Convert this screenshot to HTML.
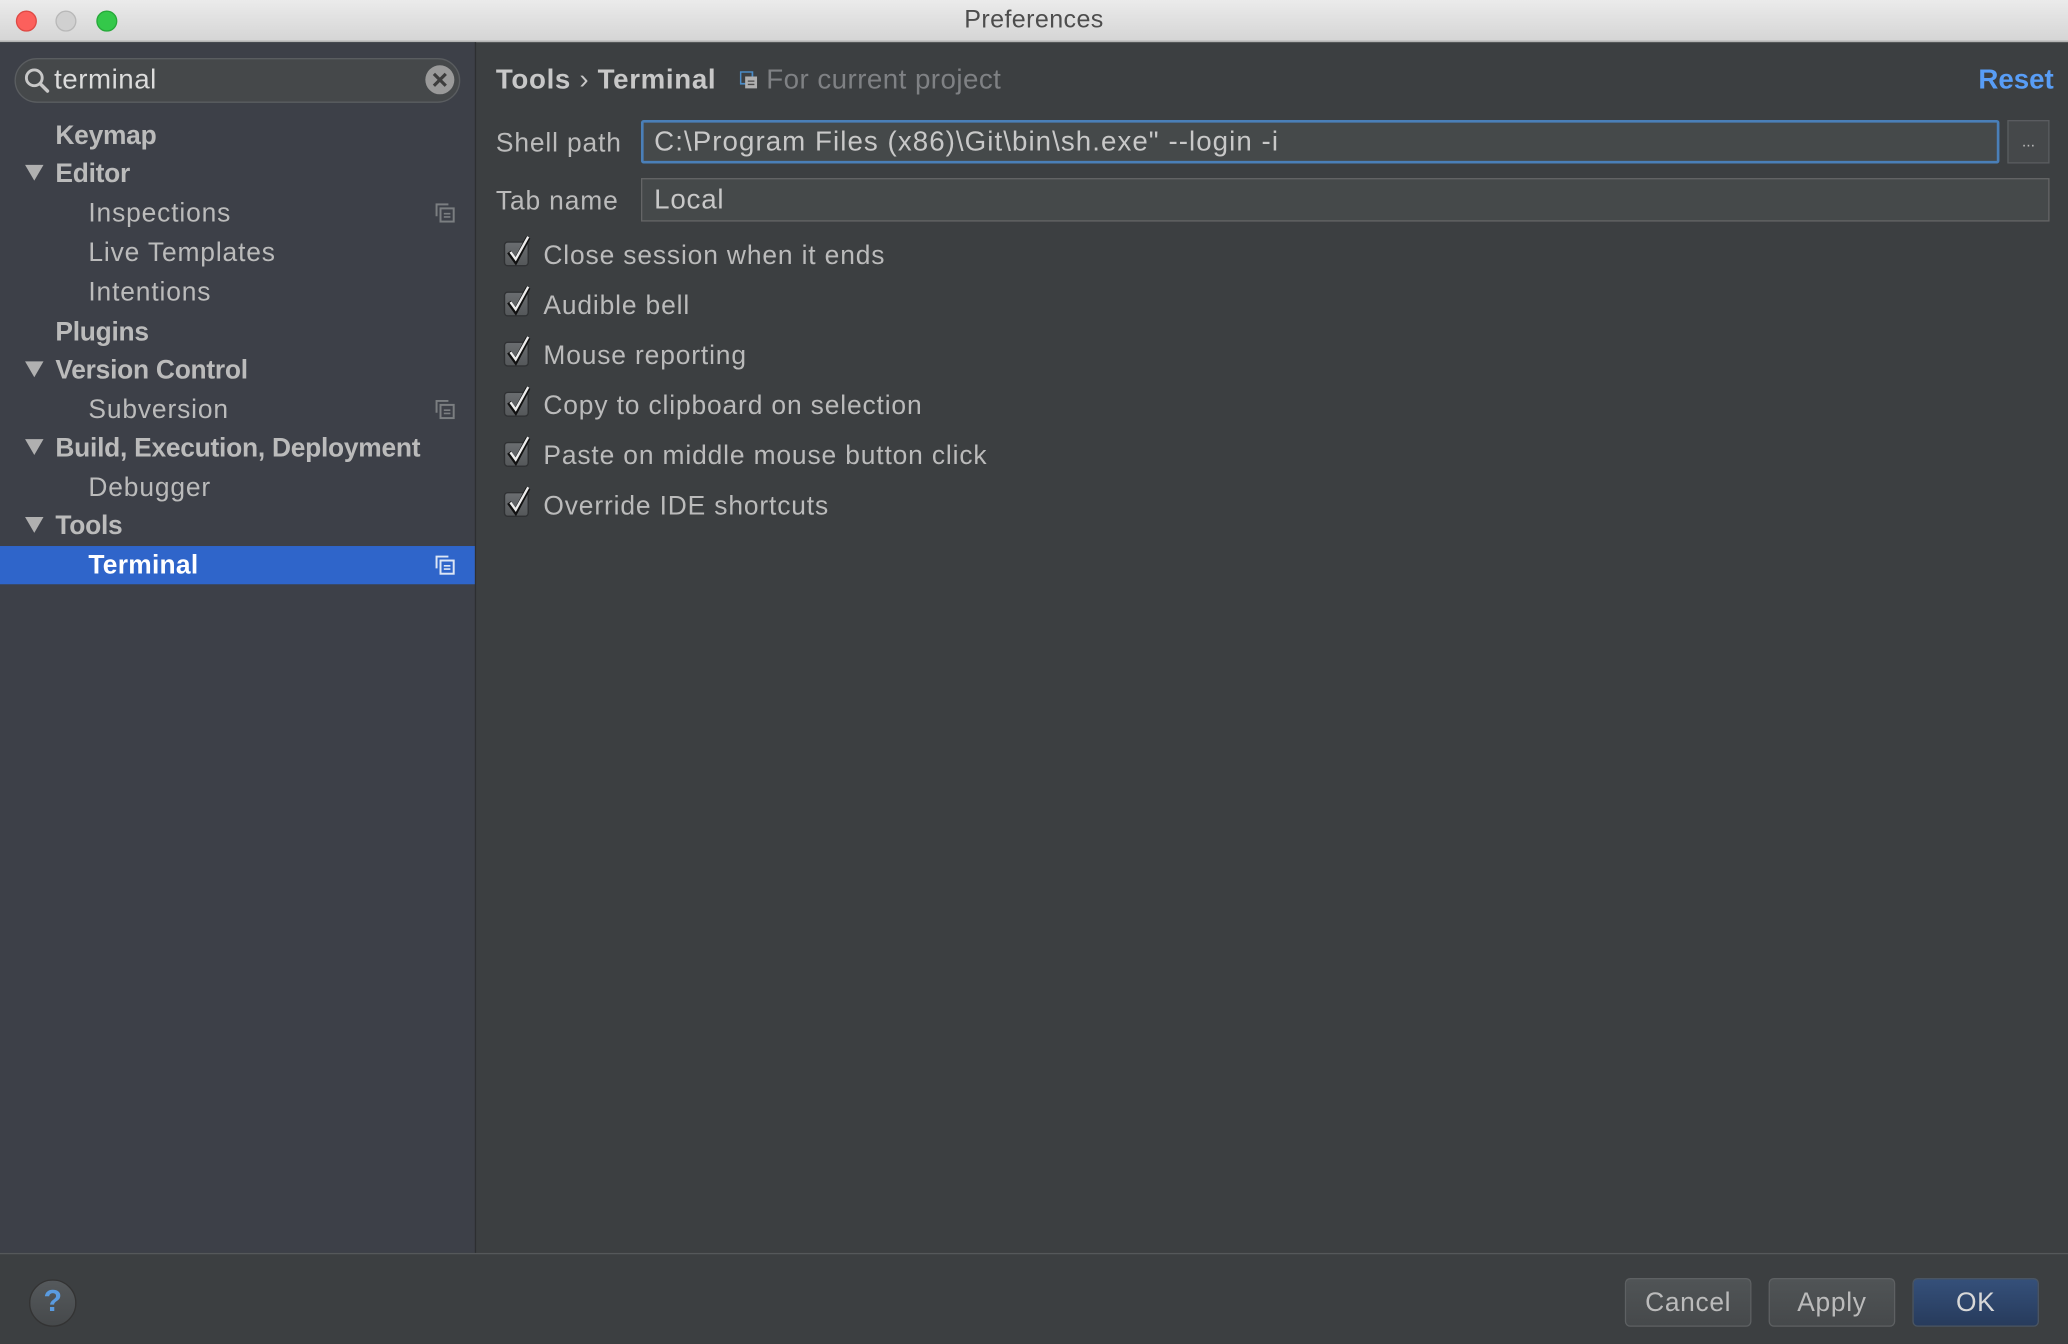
<!DOCTYPE html>
<html><head><meta charset="utf-8"><style>
html,body{margin:0;padding:0;width:2068px;height:1344px;overflow:hidden;background:#3c3f41}
#w{position:absolute;left:0;top:0;width:1568px;height:1019px;transform:scale(1.31888);transform-origin:0 0;font-family:"Liberation Sans",sans-serif;background:#3c3f41}
.a{position:absolute;white-space:nowrap}
.t{color:#bbbbbb;font-size:20px;line-height:24px;letter-spacing:0.65px}
.b{font-weight:bold;letter-spacing:-0.2px}
.tri{position:absolute;width:0;height:0;border-left:7px solid transparent;border-right:7px solid transparent;border-top:12px solid #b0b0b0}
.cb{position:absolute;left:382px;width:19px;height:19px;background:linear-gradient(#6a6d70,#55585a);border:1px solid #2f3133;border-radius:3px;box-sizing:border-box}
.cb svg{position:absolute;left:0;top:-6px}
.btn{position:absolute;top:969px;height:37px;width:96px;border:1px solid #5e6163;border-radius:4px;box-sizing:border-box;background:linear-gradient(#505456,#46494b);color:#bbbbbb;font-size:20px;text-align:center;line-height:37px;letter-spacing:0.5px}
</style></head><body><div id="w">
<div class="a" style="left:0;top:0;width:1568px;height:31px;background:linear-gradient(#ebebeb,#d5d5d5);border-bottom:1px solid #b4b4b4"></div>
<div class="a" style="left:12px;top:8px;width:14px;height:14px;border-radius:50%;background:#fc605c;border:0.5px solid #de4a45"></div>
<div class="a" style="left:42px;top:8px;width:14px;height:14px;border-radius:50%;background:#d0d0d0;border:0.5px solid #b8b8b8"></div>
<div class="a" style="left:73px;top:8px;width:14px;height:14px;border-radius:50%;background:#34c84a;border:0.5px solid #27a93a"></div>
<div class="a" style="left:0;top:5px;width:1568px;text-align:center;font-size:19px;color:#4d4d4d;letter-spacing:0.3px">Preferences</div>
<div class="a" style="left:0;top:32px;width:360px;height:918px;background:#3d4048;border-right:1px solid #2d2f31"></div>
<div class="a" style="left:11px;top:44px;width:336px;height:32px;border-radius:17px;background:#45484a;border:1px solid #5a5d60"></div>
<svg class="a" style="left:17px;top:50px" width="22" height="22" viewBox="0 0 22 22"><circle cx="9" cy="9" r="6" fill="none" stroke="#c8c8c8" stroke-width="2.2"/><line x1="13.5" y1="13.5" x2="19" y2="19" stroke="#c8c8c8" stroke-width="2.6" stroke-linecap="round"/></svg>
<div class="a" style="left:41px;top:49px;font-size:21px;color:#dcdcdc;letter-spacing:0.4px">terminal</div>
<svg class="a" style="left:322px;top:49px" width="23" height="23" viewBox="0 0 23 23"><circle cx="11.5" cy="11.5" r="11" fill="#9a9a9a"/><path d="M7 7L16 16M16 7L7 16" stroke="#3d3d3d" stroke-width="2.4"/></svg>

<div class="a t b" style="left:42px;top:91px">Keymap</div>
<div class="tri" style="left:19px;top:125px"></div><div class="a t b" style="left:42px;top:120px">Editor</div>
<div class="a t" style="left:67px;top:150px">Inspections</div>
<div class="a t" style="left:67px;top:180px">Live Templates</div>
<div class="a t" style="left:67px;top:210px">Intentions</div>
<div class="a t b" style="left:42px;top:240px">Plugins</div>
<div class="tri" style="left:19px;top:274px"></div><div class="a t b" style="left:42px;top:269px">Version Control</div>
<div class="a t" style="left:67px;top:299px">Subversion</div>
<div class="tri" style="left:19px;top:333px"></div><div class="a t b" style="left:42px;top:328px">Build, Execution, Deployment</div>
<div class="a t" style="left:67px;top:358px">Debugger</div>
<div class="tri" style="left:19px;top:392px"></div><div class="a t b" style="left:42px;top:387px">Tools</div>
<div class="a" style="left:0;top:414px;width:360px;height:29px;background:#2f65ca"></div>
<div class="a t" style="left:67px;top:417px;color:#fff;font-weight:bold;letter-spacing:0.2px">Terminal</div>
<svg class="a" style="left:330px;top:154px" width="15" height="15" viewBox="0 0 15 15"><path d="M1 10V1h9" fill="none" stroke="#7b7e81" stroke-width="1.5"/><rect x="4" y="4" width="10" height="10" fill="none" stroke="#7b7e81" stroke-width="1.5"/><path d="M6.5 8h5M6.5 10.5h5" stroke="#7b7e81" stroke-width="1.2"/></svg>
<svg class="a" style="left:330px;top:303px" width="15" height="15" viewBox="0 0 15 15"><path d="M1 10V1h9" fill="none" stroke="#7b7e81" stroke-width="1.5"/><rect x="4" y="4" width="10" height="10" fill="none" stroke="#7b7e81" stroke-width="1.5"/><path d="M6.5 8h5M6.5 10.5h5" stroke="#7b7e81" stroke-width="1.2"/></svg>
<svg class="a" style="left:330px;top:421px" width="15" height="15" viewBox="0 0 15 15"><path d="M1 10V1h9" fill="none" stroke="#dde6f5" stroke-width="1.5"/><rect x="4" y="4" width="10" height="10" fill="none" stroke="#dde6f5" stroke-width="1.5"/><path d="M6.5 8h5M6.5 10.5h5" stroke="#dde6f5" stroke-width="1.2"/></svg>

<div class="a b" style="left:376px;top:49px;font-size:21px;color:#c8c8c8;letter-spacing:0.5px">Tools <span style="font-weight:normal">›</span> Terminal</div>
<svg class="a" style="left:561px;top:54px" width="14" height="14" viewBox="0 0 14 14"><rect x="0.5" y="0.5" width="9" height="9" fill="none" stroke="#4b8cc8" stroke-width="1.3"/><rect x="4" y="4" width="9" height="9" fill="#b0b0b0"/><path d="M6 7.5h5M6 10h5" stroke="#4a4a4a" stroke-width="1"/></svg>
<div class="a" style="left:581px;top:49px;font-size:21px;color:#7f8184;letter-spacing:0.35px">For current project</div>
<div class="a b" style="left:1500px;top:49px;font-size:21px;color:#589df6;letter-spacing:0">Reset</div>

<div class="a t" style="left:376px;top:97px">Shell path</div>
<div class="a" style="left:486px;top:91px;width:1030px;height:33px;box-sizing:border-box;border:2px solid #4a7fb8;border-radius:2px;background:#45494a"></div>
<div class="a" style="left:496px;top:96px;font-size:21px;color:#c8c8c8;letter-spacing:0.8px">C:\Program Files (x86)\Git\bin\sh.exe" --login -i</div>
<div class="a" style="left:1522px;top:91px;width:32px;height:33px;box-sizing:border-box;border:1px solid #5a5d60;background:#45484a;color:#bbb;font-size:12px;text-align:center;line-height:30px">...</div>

<div class="a t" style="left:376px;top:141px">Tab name</div>
<div class="a" style="left:486px;top:135px;width:1068px;height:33px;box-sizing:border-box;border:1px solid #646566;background:#45494a"></div>
<div class="a" style="left:496px;top:140px;font-size:21px;color:#c8c8c8;letter-spacing:0.6px">Local</div>

<div class="cb" style="top:183px"><svg width="22" height="24" viewBox="0 0 22 24"><path d="M3 13l5 7L17.5 2" fill="none" stroke="#111" stroke-width="3.6"/><path d="M4 13l4 5.5L17.5 1.5" fill="none" stroke="#ececec" stroke-width="1.8"/></svg></div>
<div class="a t" style="left:412px;top:182px">Close session when it ends</div>
<div class="cb" style="top:221px"><svg width="22" height="24" viewBox="0 0 22 24"><path d="M3 13l5 7L17.5 2" fill="none" stroke="#111" stroke-width="3.6"/><path d="M4 13l4 5.5L17.5 1.5" fill="none" stroke="#ececec" stroke-width="1.8"/></svg></div>
<div class="a t" style="left:412px;top:220px">Audible bell</div>
<div class="cb" style="top:259px"><svg width="22" height="24" viewBox="0 0 22 24"><path d="M3 13l5 7L17.5 2" fill="none" stroke="#111" stroke-width="3.6"/><path d="M4 13l4 5.5L17.5 1.5" fill="none" stroke="#ececec" stroke-width="1.8"/></svg></div>
<div class="a t" style="left:412px;top:258px">Mouse reporting</div>
<div class="cb" style="top:297px"><svg width="22" height="24" viewBox="0 0 22 24"><path d="M3 13l5 7L17.5 2" fill="none" stroke="#111" stroke-width="3.6"/><path d="M4 13l4 5.5L17.5 1.5" fill="none" stroke="#ececec" stroke-width="1.8"/></svg></div>
<div class="a t" style="left:412px;top:296px">Copy to clipboard on selection</div>
<div class="cb" style="top:335px"><svg width="22" height="24" viewBox="0 0 22 24"><path d="M3 13l5 7L17.5 2" fill="none" stroke="#111" stroke-width="3.6"/><path d="M4 13l4 5.5L17.5 1.5" fill="none" stroke="#ececec" stroke-width="1.8"/></svg></div>
<div class="a t" style="left:412px;top:334px">Paste on middle mouse button click</div>
<div class="cb" style="top:373px"><svg width="22" height="24" viewBox="0 0 22 24"><path d="M3 13l5 7L17.5 2" fill="none" stroke="#111" stroke-width="3.6"/><path d="M4 13l4 5.5L17.5 1.5" fill="none" stroke="#ececec" stroke-width="1.8"/></svg></div>
<div class="a t" style="left:412px;top:372px">Override IDE shortcuts</div>

<div class="a" style="left:0;top:950px;width:1568px;height:1px;background:#55585a"></div>
<div class="a" style="left:22px;top:970px;width:34px;height:34px;border-radius:50%;background:linear-gradient(#55595c,#46494b);border:1px solid #333"></div>
<div class="a" style="left:22px;top:973px;width:36px;text-align:center;font-size:23px;font-weight:bold;color:#5a9be0">?</div>
<div class="btn" style="left:1232px">Cancel</div>
<div class="btn" style="left:1341px">Apply</div>
<div class="btn" style="left:1450px;background:linear-gradient(#35507a,#273b5c);border-color:#4a5563;color:#d8d8d8">OK</div>
</div></body></html>
